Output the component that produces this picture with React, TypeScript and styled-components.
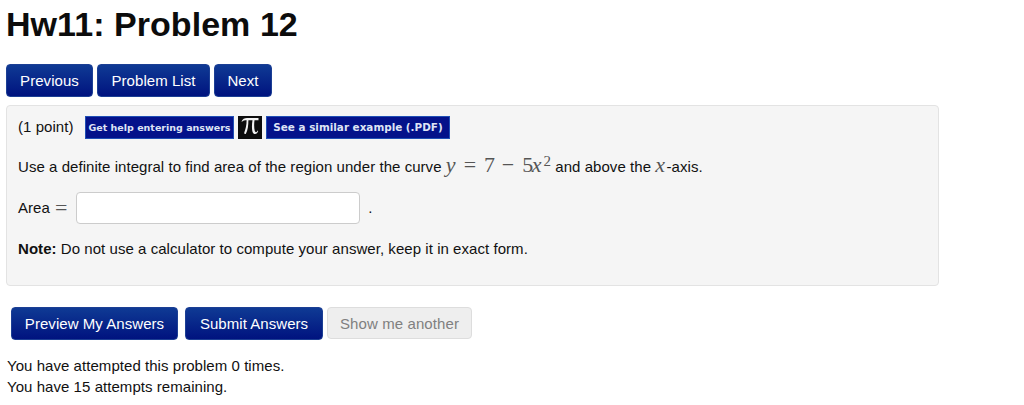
import styled, { createGlobalStyle } from "styled-components";

const GlobalStyle = createGlobalStyle`
  body {
    margin: 0;
    background: #fff;
    color: #111;
    font-family: "Liberation Sans", Arial, sans-serif;
    font-size: 15px;
    line-height: 20px;
    letter-spacing: 0.05px;
  }
`;

const Page = styled.div`
  width: 1024px;
  height: 405px;
  overflow: hidden;
  padding: 0 0 0 6px;
  box-sizing: border-box;
`;

const Title = styled.h1`
  margin: 0;
  padding-top: 3px;
  height: 64px;
  box-sizing: border-box;
  font-size: 34px;
  line-height: 42px;
  font-weight: 700;
  color: #0c0c0c;
`;

const NavRow = styled.div`
  display: flex;
  gap: 4px;
  height: 33px;
`;

const NavyButton = styled.button`
  height: 33px;
  padding: 0 14px;
  border: 1px solid #1c3f94;
  border-radius: 4px;
  background: linear-gradient(to bottom, #0f3a94, #00137f);
  color: #fff;
  font: 15px "Liberation Sans", Arial, sans-serif;
  letter-spacing: 0.05px;
  white-space: nowrap;
`;

const NavButton = styled(NavyButton)<{ $w: number }>`
  width: ${(p) => p.$w}px;
  padding: 0;
`;

const Well = styled.section`
  width: 933px;
  height: 181px;
  margin-top: 8px;
  padding: 9px 11px 0;
  box-sizing: border-box;
  background: #f5f5f5;
  border: 1px solid #e3e3e3;
  border-radius: 4px;
`;

const PointRow = styled.div`
  display: flex;
  align-items: center;
  height: 24px;
`;

const Points = styled.span`
  width: 67px;
`;

const HelpLink = styled.a<{ $size: number; $w: number }>`
  display: block;
  box-sizing: border-box;
  width: ${(p) => p.$w}px;
  height: 23px;
  line-height: 21px;
  text-align: center;
  border: 1px solid #1f4fb5;
  background: #04128a;
  color: #dfe4f5;
  font-family: "DejaVu Sans", sans-serif;
  font-size: ${(p) => p.$size}px;
  font-weight: 700;
  letter-spacing: 0;
  white-space: nowrap;
`;

const PiTile = styled.span`
  width: 24px;
  height: 23px;
  margin: 0 4px 0 4px;
  background: #0d0d0d;
  display: block;
`;

const Question = styled.p`
  margin: 14px 0 0;
  height: 24px;
  line-height: 24px;
  white-space: nowrap;
`;

const MathSym = styled.span<{ $ml?: number }>`
  font-family: "Liberation Serif", serif;
  font-size: 22px;
  color: #555;
  margin-left: ${(p) => p.$ml ?? 0}px;
`;

const MathVar = styled(MathSym).attrs({ as: "i" })<{ $mr?: number }>`
  margin-right: ${(p) => p.$mr ?? 0}px;
`;

const Sup = styled.sup`
  margin-left: 2px;
  font-family: "Liberation Serif", serif;
  font-size: 15px;
  line-height: 0;
  color: #555;
`;

const AnswerRow = styled.div`
  display: flex;
  align-items: center;
  margin-top: 15px;
  height: 32px;
`;

const Equals = styled(MathSym)`
  margin: 0 9px 0 5px;
`;

const AnswerInput = styled.input`
  width: 284px;
  height: 32px;
  box-sizing: border-box;
  background: #fff;
  border: 1px solid #ccc;
  border-radius: 4px;
  margin-right: 8px;
`;

const Note = styled.p`
  margin: 15px 0 0;
  line-height: 20px;
`;

const ActionRow = styled.div`
  display: flex;
  gap: 7px;
  margin: 21px 0 0 5px;
  height: 33px;
`;

const DisabledButton = styled.button`
  width: 145px;
  height: 32px;
  margin-left: -3px;
  border: 1px solid #ddd;
  border-radius: 4px;
  background: #eee;
  color: #808080;
  font: 15px "Liberation Sans", Arial, sans-serif;
  letter-spacing: 0.1px;
`;

const Attempts = styled.div`
  margin: 15px 0 0 1px;
  line-height: 21px;
`;

const App = () => {
  return (
    <Page>
      <GlobalStyle />
      <Title>Hw11: Problem 12</Title>
      <NavRow>
        <NavButton $w={87}>Previous</NavButton>
        <NavButton $w={113}>Problem List</NavButton>
        <NavButton $w={58}>Next</NavButton>
      </NavRow>
      <Well>
        <PointRow>
          <Points>(1 point)</Points>
          <HelpLink $size={9.5} $w={149}>Get help entering answers</HelpLink>
          <PiTile>
            <svg width="24" height="23" viewBox="0 3 24 23">
              <path
                d="M3.5 8.5 C4.5 6 6.5 5 9 5 L20.5 5 L20.5 7.2 L16.5 7.2 C16 11 16 15 16.8 18 C17.3 19.6 18.9 19.6 19.6 17.5 L20.2 18 C19.4 21 17.1 21.6 15.5 20.5 C13.7 19 13.6 12 14.5 7.2 L10.4 7.2 C10.4 12 9.8 17 8 20.5 C7.4 21.5 6 21 6.3 19.5 C7.6 16 8.6 12 8.6 7.2 C6.8 7.2 5 7.4 4 8.8 Z"
                fill="#f2f2f2"
              />
            </svg>
          </PiTile>
          <HelpLink $size={10.4} $w={184}>See a similar example (.PDF)</HelpLink>
        </PointRow>
        <Question>
          Use a definite integral to find area of the region under the curve{" "}
          <MathVar>y</MathVar>
          <MathSym $ml={8}>=</MathSym>
          <MathSym $ml={8}>7</MathSym>
          <MathSym $ml={6.5}>−</MathSym>
          <MathSym $ml={8}>5</MathSym>
          <MathVar $ml={-1.5}>x</MathVar>
          <Sup>2</Sup> and above the <MathVar $mr={1.5}>x</MathVar>-axis.
        </Question>
        <AnswerRow>
          Area
          <Equals>=</Equals>
          <AnswerInput type="text" />
          .
        </AnswerRow>
        <Note>
          <b>Note:</b> Do not use a calculator to compute your answer, keep it in exact form.
        </Note>
      </Well>
      <ActionRow>
        <NavButton $w={167}>Preview My Answers</NavButton>
        <NavButton $w={138}>Submit Answers</NavButton>
        <DisabledButton>Show me another</DisabledButton>
      </ActionRow>
      <Attempts>
        You have attempted this problem 0 times.
        <br />
        You have 15 attempts remaining.
      </Attempts>
    </Page>
  );
};

export default App;
